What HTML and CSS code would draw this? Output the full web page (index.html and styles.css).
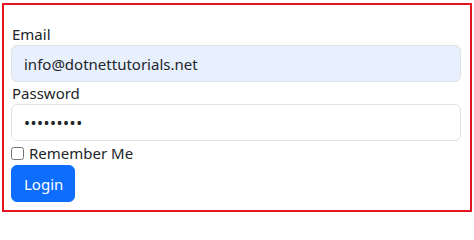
FILE: index.html
```html
<!DOCTYPE html>
<html lang="en">
<head>
<meta charset="utf-8">
<title>Login</title>
<link rel="stylesheet" href="styles.css">
</head>
<body>
<form class="frame">
  <label class="label" for="email">Email</label>
  <input class="field field-filled" id="email" type="text" value="info@dotnettutorials.net">
  <label class="label" for="password">Password</label>
  <input class="field" id="password" type="password" value="123456789">
  <label class="check">
    <input class="check-box" type="checkbox">
    <span>Remember Me</span>
  </label>
  <button class="btn" type="button">Login</button>
</form>
</body>
</html>
```
FILE: styles.css
```css
html, body {
  margin: 0;
  padding: 0;
  background: #ffffff;
}

body {
  font-family: "Noto Sans", "Open Sans", sans-serif;
  font-size: 15px;
  color: #212529;
}

.frame {
  box-sizing: border-box;
  margin: 3px 0 0 2px;
  width: 470px;
  height: 209px;
  border: 2px solid #e3161f;
  padding: 18px 9px 0 7px;
  display: flex;
  flex-direction: column;
  align-items: flex-start;
}

.label {
  display: block;
  line-height: 22px;
  height: 22px;
  padding-left: 1px;
}

.field {
  box-sizing: border-box;
  width: 450px;
  height: 37px;
  padding: 0 12px;
  font-family: inherit;
  font-size: 15px;
  color: #212529;
  border: 1px solid #dee2e6;
  border-radius: 6px;
  background: #ffffff;
  outline: none;
}

.field-filled {
  background: #e8f0fe;
}

#password {
  font-size: 16px;
  letter-spacing: 0.5px;
}

.check {
  display: flex;
  align-items: center;
  height: 24px;
}

.check-box {
  margin: 0 5px 0 0;
  width: 13px;
  height: 13px;
}

.btn {
  height: 37px;
  width: 64px;
  padding: 0 12px;
  font-family: inherit;
  font-size: 15px;
  color: #ffffff;
  background: #0d6efd;
  border: 1px solid #0d6efd;
  border-radius: 6px;
}
```
